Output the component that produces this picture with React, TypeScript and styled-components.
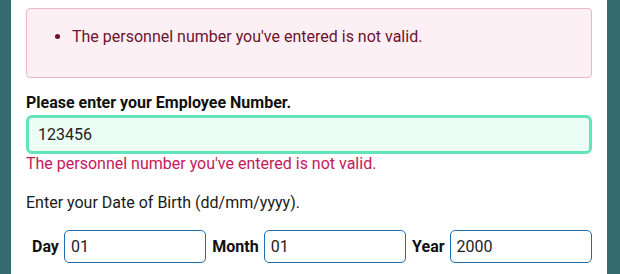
import React from "react";
import styled, { createGlobalStyle } from "styled-components";

const Global = createGlobalStyle`
  html, body { margin: 0; padding: 0; background: #336b6f; }
  body { font-family: Roboto, "Noto Sans", sans-serif; font-size: 16px; color: #212529; }
  * { box-sizing: border-box; }
`;

const Page = styled.div`
  margin: 0 13px 0 11px;
  background: #ffffff;
  height: 274px;
  padding: 8px 15px 0 15px;
  overflow: hidden;
`;

const Alert = styled.div`
  border: 1px solid #ebb8c8;
  background: #fcf0f4;
  color: #6e1230;
  border-radius: 4px;
  height: 70px;
  padding: 16px 20px 0 20px;
`;

const List = styled.ul`
  margin: 0;
  padding-left: 25px;
  line-height: 24px;
`;

const Label = styled.label`
  display: block;
  font-weight: 700;
  margin-top: 14px;
  line-height: 22px;
  color: #111;
`;

const BigInput = styled.input`
  display: block;
  width: 100%;
  height: 39px;
  margin-top: 1px;
  border: 3px solid #62e3bc;
  border-radius: 6px;
  background: #ebfdf5;
  font: inherit;
  color: #222;
  padding: 0 9px;
  outline: none;
  caret-color: #000;
`;

const ErrorText = styled.div`
  color: #c4185c;
  line-height: 20px;
  margin-top: 0;
`;

const Prompt = styled.p`
  margin: 18px 0 0 0;
  line-height: 22px;
  color: #1a1a1a;
`;

const DateRow = styled.div`
  display: flex;
  align-items: center;
  margin-top: 16px;
  padding-left: 6px;
`;

const DateLabel = styled.label`
  font-weight: 700;
  margin-right: 5px;
  color: #111;
`;

const DateInput = styled.input`
  flex: 1;
  min-width: 0;
  height: 33px;
  border: 1px solid #1f6fb5;
  border-radius: 5px;
  font: inherit;
  color: #222;
  padding: 0 6px;
  margin-right: 6px;
  outline: none;
  &:last-child { margin-right: 0; }
`;

export default function App() {
  return (
    <>
      <Global />
      <Page>
        <Alert>
          <List>
            <li>The personnel number you've entered is not valid.</li>
          </List>
        </Alert>
        <Label htmlFor="emp">Please enter your Employee Number.</Label>
        <BigInput id="emp" defaultValue="123456" autoFocus />
        <ErrorText>The personnel number you've entered is not valid.</ErrorText>
        <Prompt>Enter your Date of Birth (dd/mm/yyyy).</Prompt>
        <DateRow>
          <DateLabel>Day</DateLabel>
          <DateInput defaultValue="01" />
          <DateLabel>Month</DateLabel>
          <DateInput defaultValue="01" />
          <DateLabel>Year</DateLabel>
          <DateInput defaultValue="2000" />
        </DateRow>
      </Page>
    </>
  );
}
